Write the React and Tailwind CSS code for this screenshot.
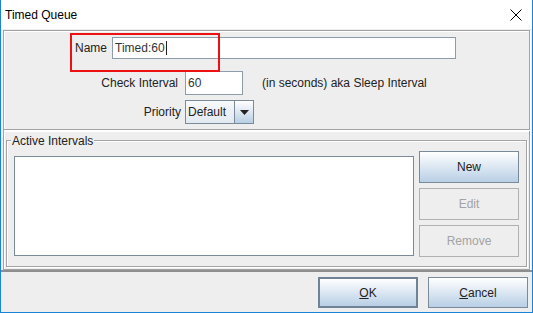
import React from "react";

const etched = "border border-[#a3a3a3] shadow-[inset_1px_1px_0_#ffffff,1px_1px_0_#ffffff]";

const OceanButton = ({ children, disabled, focused, className = "" }) => {
  const look = disabled
    ? "border border-[#b1b1b1] bg-[#eeeeee] text-[#a3a3a3]"
    : focused
    ? "border-2 border-[#6f8296] bg-gradient-to-b from-white to-[#b8cfe5] text-[#222]"
    : "border border-[#7a8a99] bg-gradient-to-b from-white to-[#b8cfe5] text-[#222]";
  return (
    <div className={`flex items-center justify-center w-[100px] ${look} ${className}`}>
      {children}
    </div>
  );
};

const App = () => {
  return (
    <div className="w-[533px] h-[313px] flex flex-col bg-[#eeeeee] border-x border-b border-[#1883d7] text-[12px] text-[#222] font-['Liberation_Sans',Arial,sans-serif]">
      {/* title bar */}
      <div className="h-[29px] shrink-0 bg-white flex items-center justify-between pl-[4px] pr-[9px]">
        <span className="text-black">Timed Queue</span>
        <svg width="12" height="12" viewBox="0 0 12 12" className="mr-[1px]">
          <path d="M0.5 0.5 L11.5 11.5 M11.5 0.5 L0.5 11.5" stroke="#000" strokeWidth="1" fill="none" />
        </svg>
      </div>

      <div className="flex flex-col px-[2px] pt-[1px]">
        {/* settings panel */}
        <div className={`relative h-[100px] ${etched} flex flex-col pt-[6px]`}>
          <div className="flex items-center h-[22px]">
            <span className="w-[103px] text-right">Name</span>
            <div className="ml-[5px] w-[344px] h-[22px] bg-white border border-[#8e9cab] flex items-center pl-[2px] text-[#333]">
              Timed:60
              <span className="w-px h-[14px] bg-[#222] ml-[1px]" />
            </div>
          </div>
          <div className="flex items-center h-[24px] mt-[12px]">
            <span className="w-[174px] text-right">Check Interval</span>
            <div className="ml-[7px] w-[58px] h-[24px] bg-white border border-[#8e9cab] flex items-center pl-[2px] text-[#333]">
              60
            </div>
            <span className="ml-[19px]">(in seconds) aka Sleep Interval</span>
          </div>
          <div className="flex items-center h-[24px] mt-[5px]">
            <span className="w-[177px] text-right">Priority</span>
            <div className="ml-[4px] w-[69px] h-[24px] flex border border-[#7a8a99]">
              <div className="flex-1 flex items-center pl-[2px] bg-gradient-to-b from-[#f7f9fc] to-[#e1e9f1] border-r border-[#7a8a99]">
                Default
              </div>
              <div className="w-[18px] flex items-center justify-center bg-gradient-to-b from-white to-[#b8cfe5]">
                <svg width="9" height="5" viewBox="0 0 9 5">
                  <path d="M0 0 H9 L4.5 5 Z" fill="#222" />
                </svg>
              </div>
            </div>
          </div>
          {/* annotation box */}
          <div className="absolute left-[66px] top-[2px] w-[150px] h-[39px] border-2 border-[#ee1111]" />
        </div>

        {/* active intervals panel */}
        <div className={`h-[140px] ${etched} pt-[9px] px-[2px] pb-[2px] flex`}>
          <div className={`relative flex-1 ${etched} flex items-start pt-[10px] pl-[7px] pr-[6px]`}>
            <span className="absolute left-[4px] -top-[7px] px-[1px] bg-[#eeeeee] leading-[14px]">
              Active Intervals
            </span>
            <div className="mt-[5px] w-[400px] h-[100px] bg-white border border-[#7a8a99]" />
            <div className="ml-[5px] flex flex-col gap-[5px]">
              <OceanButton className="h-[32px]">New</OceanButton>
              <OceanButton disabled className="h-[32px]">Edit</OceanButton>
              <OceanButton disabled className="h-[32px]">Remove</OceanButton>
            </div>
          </div>
        </div>
      </div>

      <div className="h-[2px] shrink-0 bg-[#8e8e8e]" />

      {/* button bar */}
      <div className="flex-1 flex justify-end items-start pt-[5px] pr-[4px] gap-[10px]">
        <OceanButton focused className="h-[31px]">
          <span><span className="underline">O</span>K</span>
        </OceanButton>
        <OceanButton className="h-[31px]">
          <span><span className="underline">C</span>ancel</span>
        </OceanButton>
      </div>
    </div>
  );
};

export default App;
